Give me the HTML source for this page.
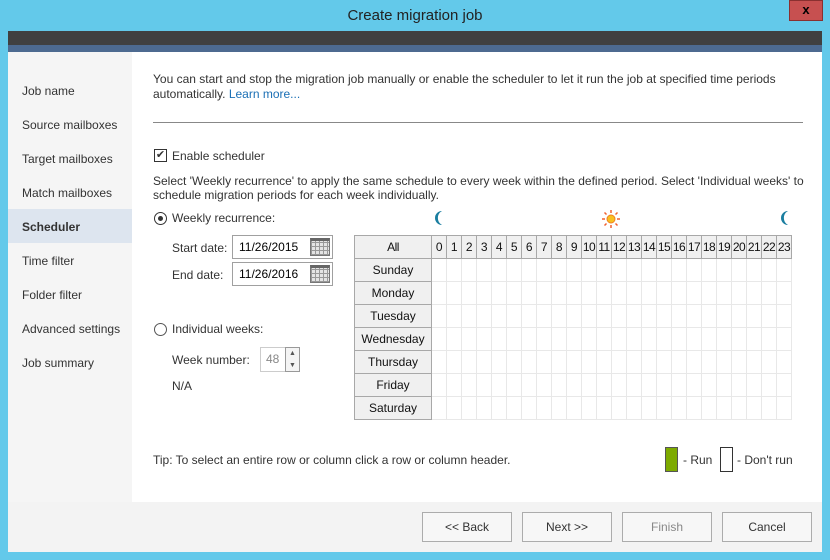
<!DOCTYPE html>
<html><head><meta charset="utf-8"><style>
*{box-sizing:border-box;margin:0;padding:0}
body{width:830px;height:560px;background:#63c9ea;font-family:"Liberation Sans",sans-serif;font-size:12px;color:#333;position:relative;overflow:hidden}
.a{position:absolute}
.title{left:0;top:0;width:830px;height:31px;text-align:center;line-height:31px;font-size:15px;color:#222}
.close{left:789px;top:0;width:34px;height:21px;background:#c75050;border:1px solid #8a3030;color:#000;font-weight:bold;text-align:center;line-height:18px;font-size:13px}
.side div{position:absolute;left:14px;font-size:12px;color:#333}
.btn{position:absolute;top:512px;width:90px;height:30px;border:1px solid #acacac;background:#f7f7f7;text-align:center;line-height:28px;color:#333}
table{border-collapse:collapse;position:absolute;left:354px;top:235px}
td{border:1px solid #e8e8e8;width:15px;height:23px;padding:0}
tr:first-child td{border:1px solid #a8a8a8;background:#f0f0f0;text-align:center;font-size:12px;color:#111;letter-spacing:-0.5px}
td.h{width:77px;border:1px solid #a8a8a8;background:#f0f0f0;text-align:center;color:#111;font-size:12px}
.date{position:absolute;width:101px;height:24px;border:1px solid #a0a0a0;background:#fff;padding-left:6px;line-height:22px;color:#000}
.cal{position:absolute;right:2px;top:2px;width:20px;height:18px;border:1px solid #777;border-top:3px solid #666;background:repeating-linear-gradient(90deg,#999 0 1px,transparent 1px 4px),repeating-linear-gradient(0deg,#999 0 1px,#e4e4e4 1px 4px)}
</style></head><body>
<div class="a title">Create migration job</div>
<div class="a close">x</div>
<div class="a" style="left:8px;top:31px;width:814px;height:14px;background:#404040"></div>
<div class="a" style="left:8px;top:45px;width:814px;height:7px;background:#4d6a90"></div>
<div class="a" style="left:8px;top:52px;width:814px;height:500px;background:#fff"></div>
<div class="a side" style="left:8px;top:52px;width:124px;height:450px;background:#f5f5f5">
<div style="top:32px">Job name</div>
<div style="top:66px">Source mailboxes</div>
<div style="top:100px">Target mailboxes</div>
<div style="top:134px">Match mailboxes</div>
<div style="top:157px;left:0;width:124px;height:34px;background:#dde5ef"></div>
<div style="top:168px;font-weight:bold;color:#333">Scheduler</div>
<div style="top:202px">Time filter</div>
<div style="top:236px">Folder filter</div>
<div style="top:270px">Advanced settings</div>
<div style="top:304px">Job summary</div>
</div>
<div class="a" style="left:8px;top:502px;width:814px;height:50px;background:#f3f3f3"></div>
<div class="a" style="left:153px;top:72px;width:650px;line-height:15px">You can start and stop the migration job manually or enable the scheduler to let it run the job at specified time periods automatically. <span style="color:#1a6fb5">Learn more...</span></div>
<div class="a" style="left:153px;top:122px;width:650px;height:1px;background:#888"></div>
<div class="a" style="left:154px;top:149px;width:13px;height:13px;border:1px solid #333;background:#fff;font-size:11px;line-height:11px;text-align:center">✔</div>
<div class="a" style="left:172px;top:149px">Enable scheduler</div>
<div class="a" style="left:153px;top:174px;width:660px;line-height:14px">Select 'Weekly recurrence' to apply the same schedule to every week within the defined period. Select 'Individual weeks' to schedule migration periods for each week individually.</div>
<div class="a" style="left:154px;top:212px;width:13px;height:13px;border:1px solid #333;border-radius:50%;background:#fff"><div class="a" style="left:3px;top:3px;width:5px;height:5px;border-radius:50%;background:#333"></div></div>
<div class="a" style="left:172px;top:211px">Weekly recurrence:</div>
<div class="a" style="left:172px;top:241px">Start date:</div>
<div class="date" style="left:232px;top:235px">11/26/2015<div class="cal"></div></div>
<div class="a" style="left:172px;top:268px">End date:</div>
<div class="date" style="left:232px;top:262px">11/26/2016<div class="cal"></div></div>
<div class="a" style="left:154px;top:323px;width:13px;height:13px;border:1px solid #555;border-radius:50%;background:#fff"></div>
<div class="a" style="left:172px;top:322px">Individual weeks:</div>
<div class="a" style="left:172px;top:353px">Week number:</div>
<div class="a" style="left:260px;top:347px;width:40px;height:25px;border:1px solid #ccc;color:#888;line-height:23px;padding-left:5px">48</div>
<div class="a" style="left:285px;top:347px;width:15px;height:25px;border:1px solid #999;background:#f4f4f4;font-size:7px;text-align:center;line-height:12px;color:#555">▲<br>▼</div>
<div class="a" style="left:172px;top:379px">N/A</div>
<svg class="a" style="left:432px;top:210px" width="12" height="16"><path d="M10 1A7 7 0 1 0 10 15A8 8 0 0 1 10 1Z" fill="#1a7ea0"/></svg>
<svg class="a" style="left:602px;top:210px" width="18" height="18"><circle cx="9" cy="9" r="4" fill="#f7c020" stroke="#f08020"/><g stroke="#f06030" stroke-width="1.5"><path d="M9 0v3M9 15v3M0 9h3M15 9h3M2.5 2.5l2 2M13.5 13.5l2 2M2.5 15.5l2-2M13.5 4.5l2-2"/></g></svg>
<svg class="a" style="left:778px;top:210px" width="12" height="16"><path d="M10 1A7 7 0 1 0 10 15A8 8 0 0 1 10 1Z" fill="#1a7ea0"/></svg>
<table>
<tr><td class="h" style="height:22px">All</td><td>0</td><td>1</td><td>2</td><td>3</td><td>4</td><td>5</td><td>6</td><td>7</td><td>8</td><td>9</td><td>10</td><td>11</td><td>12</td><td>13</td><td>14</td><td>15</td><td>16</td><td>17</td><td>18</td><td>19</td><td>20</td><td>21</td><td>22</td><td>23</td></tr>
<tr><td class="h">Sunday</td><td></td><td></td><td></td><td></td><td></td><td></td><td></td><td></td><td></td><td></td><td></td><td></td><td></td><td></td><td></td><td></td><td></td><td></td><td></td><td></td><td></td><td></td><td></td><td></td></tr>
<tr><td class="h">Monday</td><td></td><td></td><td></td><td></td><td></td><td></td><td></td><td></td><td></td><td></td><td></td><td></td><td></td><td></td><td></td><td></td><td></td><td></td><td></td><td></td><td></td><td></td><td></td><td></td></tr>
<tr><td class="h">Tuesday</td><td></td><td></td><td></td><td></td><td></td><td></td><td></td><td></td><td></td><td></td><td></td><td></td><td></td><td></td><td></td><td></td><td></td><td></td><td></td><td></td><td></td><td></td><td></td><td></td></tr>
<tr><td class="h">Wednesday</td><td></td><td></td><td></td><td></td><td></td><td></td><td></td><td></td><td></td><td></td><td></td><td></td><td></td><td></td><td></td><td></td><td></td><td></td><td></td><td></td><td></td><td></td><td></td><td></td></tr>
<tr><td class="h">Thursday</td><td></td><td></td><td></td><td></td><td></td><td></td><td></td><td></td><td></td><td></td><td></td><td></td><td></td><td></td><td></td><td></td><td></td><td></td><td></td><td></td><td></td><td></td><td></td><td></td></tr>
<tr><td class="h">Friday</td><td></td><td></td><td></td><td></td><td></td><td></td><td></td><td></td><td></td><td></td><td></td><td></td><td></td><td></td><td></td><td></td><td></td><td></td><td></td><td></td><td></td><td></td><td></td><td></td></tr>
<tr><td class="h">Saturday</td><td></td><td></td><td></td><td></td><td></td><td></td><td></td><td></td><td></td><td></td><td></td><td></td><td></td><td></td><td></td><td></td><td></td><td></td><td></td><td></td><td></td><td></td><td></td><td></td></tr>
</table>
<div class="a" style="left:153px;top:453px">Tip: To select an entire row or column click a row or column header.</div>
<div class="a" style="left:665px;top:447px;width:13px;height:25px;background:#7daa00;border:1px solid #555"></div>
<div class="a" style="left:683px;top:453px">- Run</div>
<div class="a" style="left:720px;top:447px;width:13px;height:25px;background:#fff;border:1px solid #333"></div>
<div class="a" style="left:737px;top:453px">- Don't run</div>
<div class="btn" style="left:422px">&lt;&lt; Back</div>
<div class="btn" style="left:522px">Next &gt;&gt;</div>
<div class="btn" style="left:622px;color:#888">Finish</div>
<div class="btn" style="left:722px">Cancel</div>
</body></html>
